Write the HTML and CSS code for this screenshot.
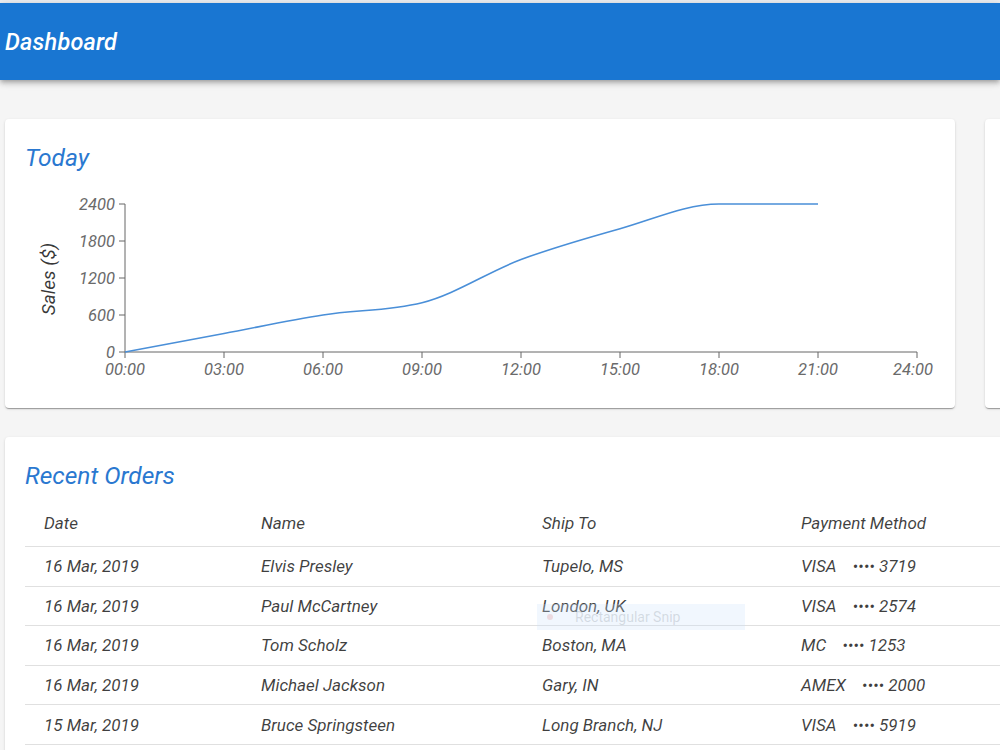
FILE: index.html
```html
<!DOCTYPE html>
<html lang="en">
<head>
<meta charset="utf-8">
<title>Dashboard</title>
<link rel="stylesheet" href="styles.css">
</head>
<body>
<div class="page">
  <header class="appbar">
    <h1 class="appbar-title">Dashboard</h1>
  </header>
  <main class="grid">
    <section class="card chart-card">
      <h2 class="card-title">Today</h2>
      <svg class="chart" width="910" height="214" viewBox="25 174 910 214" xmlns="http://www.w3.org/2000/svg">
        <g class="axis">
          <line x1="125" y1="204" x2="125" y2="352"/>
          <line x1="119" y1="204" x2="125" y2="204"/>
          <line x1="119" y1="241" x2="125" y2="241"/>
          <line x1="119" y1="278" x2="125" y2="278"/>
          <line x1="119" y1="315" x2="125" y2="315"/>
          <line x1="119" y1="352" x2="125" y2="352"/>
          <line x1="125" y1="352" x2="917" y2="352"/>
          <line x1="125" y1="352" x2="125" y2="358"/>
          <line x1="224" y1="352" x2="224" y2="358"/>
          <line x1="323" y1="352" x2="323" y2="358"/>
          <line x1="422" y1="352" x2="422" y2="358"/>
          <line x1="521" y1="352" x2="521" y2="358"/>
          <line x1="620" y1="352" x2="620" y2="358"/>
          <line x1="719" y1="352" x2="719" y2="358"/>
          <line x1="818" y1="352" x2="818" y2="358"/>
          <line x1="917" y1="352" x2="917" y2="358"/>
        </g>
        <g class="tick-label y-labels">
          <text x="115" y="210">2400</text>
          <text x="115" y="247">1800</text>
          <text x="115" y="284">1200</text>
          <text x="115" y="321">600</text>
          <text x="115" y="358">0</text>
        </g>
        <g class="tick-label x-labels">
          <text x="125" y="375">00:00</text>
          <text x="224" y="375">03:00</text>
          <text x="323" y="375">06:00</text>
          <text x="422" y="375">09:00</text>
          <text x="521" y="375">12:00</text>
          <text x="620" y="375">15:00</text>
          <text x="719" y="375">18:00</text>
          <text x="818" y="375">21:00</text>
          <text x="913" y="375">24:00</text>
        </g>
        <text class="axis-title" transform="translate(55,279) rotate(-90)">Sales ($)</text>
        <path class="line" d="M125,352 C158,345.83 191,339.67 224,333.5 C257,327.33 290,320.14 323,315 C356,309.86 389,310.89 422,302.67 C455,294.45 488,271.83 521,259.5 C554,247.17 587,237.92 620,228.67 C653,219.42 686,204 719,204 C752,204 785,204 818,204"/>
      </svg>
    </section>
    <section class="card side-card"></section>
    <section class="card orders-card">
      <h2 class="card-title orders-title">Recent Orders</h2>
      <table class="orders">
        <colgroup>
          <col class="c-date"><col class="c-name"><col class="c-ship"><col class="c-pay"><col>
        </colgroup>
        <thead>
          <tr><th>Date</th><th>Name</th><th>Ship To</th><th>Payment Method</th><th class="amount">Sale Amount</th></tr>
        </thead>
        <tbody>
          <tr><td>16 Mar, 2019</td><td>Elvis Presley</td><td>Tupelo, MS</td><td>VISA<span class="gap"></span>•••• 3719</td><td class="amount">$312.44</td></tr>
          <tr><td>16 Mar, 2019</td><td>Paul McCartney</td><td>London, UK</td><td>VISA<span class="gap"></span>•••• 2574</td><td class="amount">$866.99</td></tr>
          <tr><td>16 Mar, 2019</td><td>Tom Scholz</td><td>Boston, MA</td><td>MC<span class="gap"></span>•••• 1253</td><td class="amount">$100.81</td></tr>
          <tr><td>16 Mar, 2019</td><td>Michael Jackson</td><td>Gary, IN</td><td>AMEX<span class="gap"></span>•••• 2000</td><td class="amount">$654.39</td></tr>
          <tr><td>15 Mar, 2019</td><td>Bruce Springsteen</td><td>Long Branch, NJ</td><td>VISA<span class="gap"></span>•••• 5919</td><td class="amount">$212.79</td></tr>
        </tbody>
      </table>
    </section>
  </main>
  <div class="snip"><span class="snip-dot"></span><span class="snip-text">Rectangular Snip</span></div>
</div>
</body>
</html>
```

FILE: styles.css
```css
html, body {
  margin: 0;
  padding: 0;
  width: 1000px;
  height: 750px;
  overflow: hidden;
  background: #f5f5f5;
}

.page {
  position: relative;
  width: 1000px;
  height: 750px;
  padding-top: 3px;
  background: #f5f5f5;
  box-sizing: border-box;
  font-family: Roboto, "Liberation Sans", sans-serif;
  font-style: italic;
  color: rgba(0, 0, 0, 0.78);
  overflow: hidden;
}

.page::before {
  content: "";
  position: absolute;
  left: 0;
  top: 0;
  width: 100%;
  height: 3px;
  background: #eceef1;
}

.appbar {
  position: relative;
  z-index: 1;
  height: 77px;
  display: flex;
  align-items: center;
  padding-left: 5px;
  background: #1976d2;
  box-shadow: 0 2px 4px -1px rgba(0,0,0,0.2), 0 4px 5px 0 rgba(0,0,0,0.14), 0 1px 10px 0 rgba(0,0,0,0.12);
}

.appbar-title {
  margin: 0;
  font-size: 23.5px;
  font-weight: 500;
  font-style: italic;
  color: #fff;
  letter-spacing: 0.2px;
}

.grid {
  display: grid;
  grid-template-columns: 950px 300px;
  column-gap: 30px;
  row-gap: 29px;
  padding: 39px 0 0 5px;
}

.card {
  background: #fff;
  border-radius: 4px;
  box-shadow: 0 2px 1px -1px rgba(0,0,0,0.2), 0 1px 1px 0 rgba(0,0,0,0.14), 0 1px 3px 0 rgba(0,0,0,0.12);
  padding: 20px;
  box-sizing: border-box;
}

.chart-card {
  height: 289px;
  display: flex;
  flex-direction: column;
}

.side-card {
  height: 289px;
}

.orders-card {
  grid-column: 1 / 3;
  height: 400px;
}

.card-title {
  margin: 0;
  padding-top: 3px;
  font-size: 24.5px;
  line-height: 32px;
  font-weight: 400;
  font-style: italic;
  color: #2a78d0;
}

.orders-title {
  margin-bottom: 7px;
}

.chart {
  display: block;
  overflow: visible;
}

.axis line {
  stroke: #666;
  stroke-width: 1;
}

.tick-label text {
  font-family: Roboto, "Liberation Sans", sans-serif;
  font-style: italic;
  font-size: 16.5px;
  fill: #6a6a6a;
}

.y-labels text {
  text-anchor: end;
}

.x-labels text {
  text-anchor: middle;
}

.axis-title {
  font-family: Roboto, "Liberation Sans", sans-serif;
  font-style: italic;
  font-size: 19px;
  fill: rgba(0,0,0,0.78);
  text-anchor: middle;
}

.line {
  fill: none;
  stroke: #4a8fd8;
  stroke-width: 1.6;
}

.orders {
  border-collapse: collapse;
  table-layout: fixed;
  width: 1240px;
}

.c-date { width: 217px; }
.c-name { width: 281px; }
.c-ship { width: 259px; }
.c-pay { width: 260px; }

.orders th,
.orders td {
  padding: 0 19px;
  text-align: left;
  font-size: 17px;
  font-weight: 400;
  font-style: italic;
  color: rgba(0,0,0,0.76);
  border-bottom: 1px solid #e0e0e0;
  white-space: nowrap;
}

.orders th {
  height: 47px;
}

.orders td {
  height: 38.6px;
}

.orders .amount {
  text-align: right;
}

.gap {
  display: inline-block;
  width: 16px;
}

.snip {
  position: absolute;
  left: 537px;
  top: 604px;
  width: 208px;
  height: 26px;
  display: flex;
  align-items: center;
  gap: 22px;
  padding-left: 10px;
  box-sizing: border-box;
  background: rgba(205, 228, 250, 0.28);
}

.snip-dot {
  width: 6px;
  height: 6px;
  border-radius: 50%;
  background: rgba(220, 120, 120, 0.22);
}

.snip-text {
  font-style: normal;
  font-size: 14px;
  color: rgba(120, 130, 140, 0.25);
}
```
